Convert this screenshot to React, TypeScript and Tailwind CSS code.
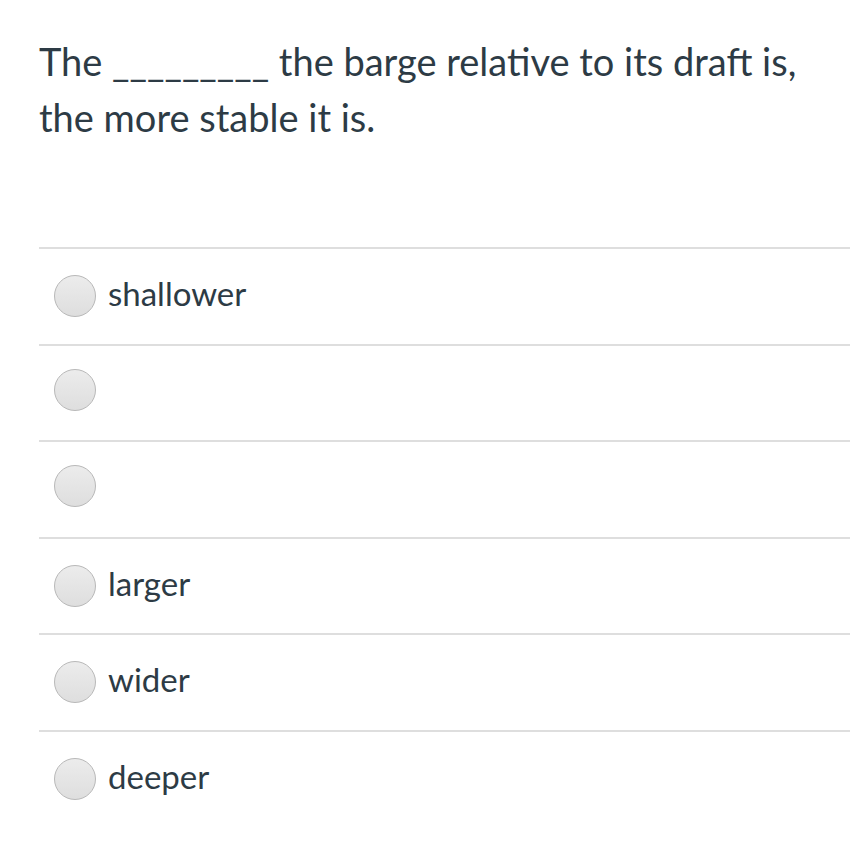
const options = ["shallower", "", "", "larger", "wider", "deeper"]

function Radio() {
  return (
    <span className="block h-[42px] w-[42px] shrink-0 rounded-full border border-[#b8b8b8] bg-gradient-to-b from-[#ececec] to-[#dedede]" />
  )
}

export default function App() {
  return (
    <div className="min-h-[864px] bg-white pl-[39px] pr-[14px] pt-[33px] text-[#2d3b45]" style={{ fontFamily: "Lato, 'Open Sans', sans-serif" }}>
      <p className="text-[38px] leading-[56px]">
        The _________ the barge relative to its draft is,
        <br />
        the more stable it is.
      </p>
      <div className="mt-[102px] border-t-2 border-[#dedede]">
        {options.map((label, i) => (
          <div key={i} className="h-[96.5px] border-b-2 border-[#dedede] pl-[15px] pt-[23px] last:border-b-0">
            <div className="flex items-center gap-3">
              <Radio />
              <span className="mb-[6px] text-[33px] leading-[42px]">{label}</span>
            </div>
          </div>
        ))}
      </div>
    </div>
  )
}
